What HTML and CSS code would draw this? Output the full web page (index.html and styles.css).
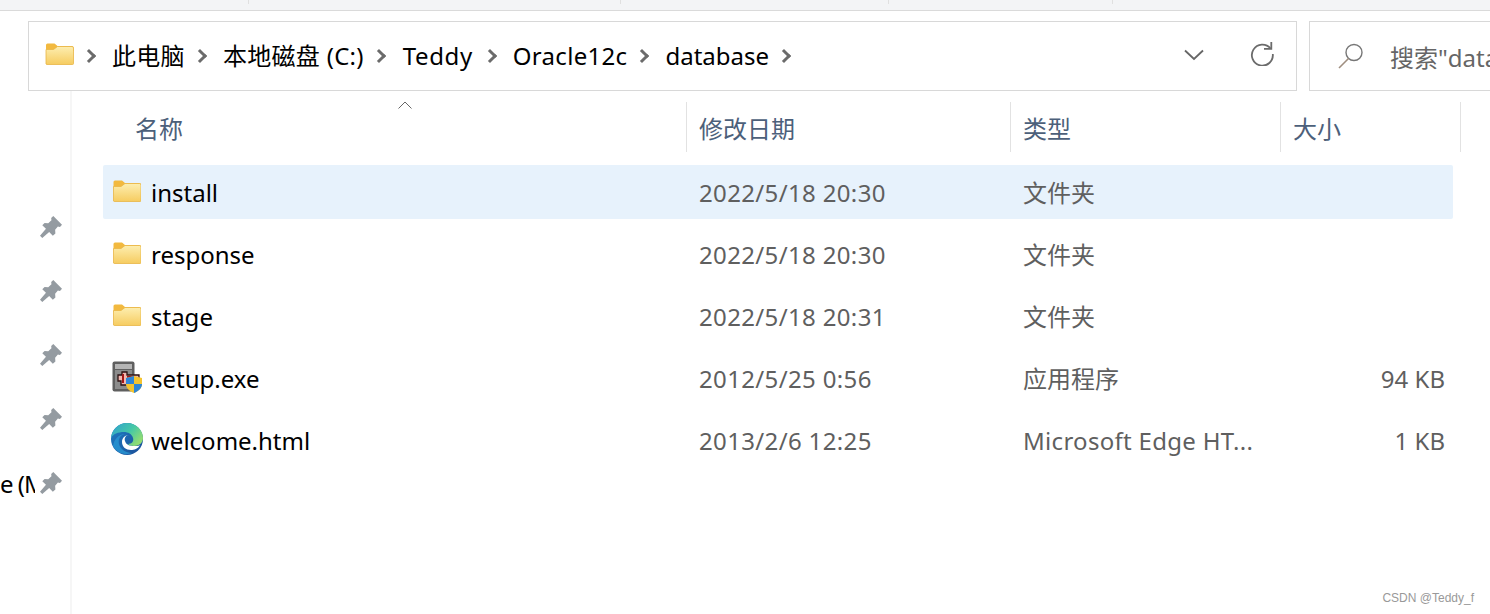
FILE: index.html
```html
<!DOCTYPE html>
<html lang="zh-CN">
<head>
<meta charset="utf-8">
<title>database</title>
<link rel="stylesheet" href="styles.css">
</head>
<body>
<svg class="defs" width="0" height="0" aria-hidden="true">
  <defs>
    <linearGradient id="fg" x1="0" y1="0" x2="0" y2="1">
      <stop offset="0" stop-color="#fdeeb0"/><stop offset="1" stop-color="#f6cc60"/>
    </linearGradient>
    <symbol id="folder" viewBox="0 0 28 22">
      <path d="M0.5 2A1.5 1.5 0 0 1 2 .5H9L12 3H26.5A1.5 1.5 0 0 1 28 4.5V8H.5Z" fill="#f2b93f"/>
      <path d="M.5 21V6.5H8L12 3.5H26.5A1.5 1.5 0 0 1 28 5V20.5A1 1 0 0 1 27 21.5H1.5A1 1 0 0 1 .5 21Z" fill="url(#fg)" stroke="#e9b545" stroke-width=".8"/>
    </symbol>
    <symbol id="pin" viewBox="0 0 24 24">
      <path d="M14.500 0 24 9.500 21.800 12 19.500 11.500 16.500 15 16.800 19 14 21.500 10 17.500 2.500 24 0 21.500 6.500 14 2.500 10 5 7.500 9 8 12.500 4.500 12.200 2.200Z" fill="#949ba1"/>
    </symbol>
    <linearGradient id="eg1" x1="0" y1="0" x2="1" y2="1">
      <stop offset="0" stop-color="#1f7fc6"/><stop offset="1" stop-color="#1b4d96"/>
    </linearGradient>
    <linearGradient id="eg2" x1="0" y1="0" x2="1" y2=".6">
      <stop offset="0" stop-color="#2f9fd2"/><stop offset=".6" stop-color="#45c8a6"/><stop offset="1" stop-color="#8fdc74"/>
    </linearGradient>
  </defs>
</svg>

<div class="tabstrip">
  <span class="tick"></span><span class="tick"></span><span class="tick"></span><span class="tick"></span>
</div>

<div class="navbar">
  <div class="address">
    <svg class="crumb-folder"><use href="#folder"/></svg>
    <span class="sep"></span><span class="crumb">此电脑</span>
    <span class="sep"></span><span class="crumb">本地磁盘 (C:)</span>
    <span class="sep"></span><span class="crumb crumb-wide">Teddy</span>
    <span class="sep"></span><span class="crumb">Oracle12c</span>
    <span class="sep"></span><span class="crumb crumb-plain">database</span>
    <span class="sep"></span>
    <svg class="addr-chevron" viewBox="0 0 20 12"><path d="M1 1.500 10 10l9-8.500" fill="none" stroke="#666" stroke-width="1.800"/></svg>
    <svg class="addr-refresh" viewBox="0 0 24 24"><path d="M20.500 6.500A10.500 10.500 0 1 0 22.800 12" fill="none" stroke="#6b6b6b" stroke-width="1.800"/><path d="M14 6.800h7.300V0" fill="none" stroke="#6b6b6b" stroke-width="1.800"/></svg>
  </div>
  <div class="search">
    <svg class="search-icon" viewBox="0 0 26 26"><circle cx="16" cy="9.500" r="8" fill="none" stroke="#777" stroke-width="1.400"/><path d="M10.500 15.500 1 25" stroke="#a08f80" stroke-width="1.600"/></svg>
    <span class="search-text">搜索"database"</span>
  </div>
</div>

<div class="main">
  <aside class="sidebar">
    <div class="pinrow"><svg class="pin"><use href="#pin"/></svg></div>
    <div class="pinrow"><svg class="pin"><use href="#pin"/></svg></div>
    <div class="pinrow"><svg class="pin"><use href="#pin"/></svg></div>
    <div class="pinrow"><svg class="pin"><use href="#pin"/></svg></div>
    <div class="pinrow"><span class="navlabel">e (M</span><svg class="pin"><use href="#pin"/></svg></div>
  </aside>

  <section class="list">
    <div class="head">
      <div class="hcell hname">名称<svg class="sort" viewBox="0 0 14 8"><path d="M.5 7.500 7 1l6.500 6.500" fill="none" stroke="#666" stroke-width="1"/></svg></div>
      <div class="hcell hdate">修改日期</div>
      <div class="hcell htype">类型</div>
      <div class="hcell hsize">大小</div>
    </div>

    <div class="row selected">
      <div class="name"><svg class="ficon"><use href="#folder"/></svg>install</div>
      <div class="date">2022/5/18 20:30</div><div class="type">文件夹</div><div class="size"></div>
    </div>
    <div class="row">
      <div class="name"><svg class="ficon"><use href="#folder"/></svg>response</div>
      <div class="date">2022/5/18 20:30</div><div class="type">文件夹</div><div class="size"></div>
    </div>
    <div class="row">
      <div class="name"><svg class="ficon"><use href="#folder"/></svg>stage</div>
      <div class="date">2022/5/18 20:31</div><div class="type">文件夹</div><div class="size"></div>
    </div>
    <div class="row">
      <div class="name">
        <svg class="ficon tall" viewBox="0 0 30 32">
          <rect x="0.500" y="0.500" width="22" height="30" rx="2" fill="#5f5f5f"/>
          <rect x="3" y="3" width="17" height="5" fill="#b4b4b4"/>
          <rect x="3" y="9" width="17" height="19" fill="#8c8c8c"/>
          <path d="M6 14h4v-3h5v3h12v6H15v4H9v-4H6Z" fill="#f3b7b0" stroke="#2c1212" stroke-width="1.300"/>
          <path d="M11 13v9M15 16h5v2h-5" stroke="#a31818" stroke-width="2" fill="none"/>
          <path d="M14 17 22 15l8 2v6c0 4-3 7-8 9-5-2-8-5-8-9Z" fill="#f4c430"/>
          <path d="M22 15v8h-8v-6ZM22 23h8c0 4-3 7-8 9Z" fill="#2f86d6"/>
        </svg>setup.exe
      </div>
      <div class="date">2012/5/25 0:56</div><div class="type">应用程序</div><div class="size">94 KB</div>
    </div>
    <div class="row">
      <div class="name">
        <svg class="ficon tall" viewBox="0 0 32 32">
          <circle cx="16" cy="16" r="16" fill="url(#eg1)"/>
          <path d="M0 15C1 6 8 0 16 0c9 0 16 7 16 15 0 5-4 8-9 8-3 0-5-1-6-2 4 0 6-3 5-6-1-4-5-6-9-6C7 9 2 11 0 15Z" fill="url(#eg2)"/>
          <path d="M14 11c-5 1-7 5-6 10 1 5 7 9 13 9-7 3-15 0-19-7 1-7 6-12 12-12Z" fill="#2a9ad6" opacity=".75"/>
          <path d="M23 23c-4 0-8-1-9-5-1-3 1-6 4-6-4 0-7 3-7 7 0 5 4 8 9 8 3 0 7-1 9-5-1 1-3 1-6 1Z" fill="#fff"/>
        </svg>welcome.html
      </div>
      <div class="date">2013/2/6 12:25</div><div class="type type-wide">Microsoft Edge HT...</div><div class="size">1 KB</div>
    </div>
  </section>
</div>
<div class="watermark">CSDN @Teddy_f</div>
</body>
</html>
```
FILE: styles.css
```css
* { box-sizing: border-box; }
html, body { margin: 0; height: 100%; }
body {
  width: 1490px;
  height: 614px;
  overflow: hidden;
  background: #fff;
  position: relative;
  font-family: "Noto Sans", "Noto Sans CJK SC", sans-serif;
  font-size: 24px;
  color: #000;
}
.defs { position: absolute; }

.tabstrip {
  height: 11px;
  background: #f3f4f6;
  border-bottom: 1px solid #dadada;
  display: flex;
  padding-left: 248px;
}
.tick { width: 1px; height: 4px; background: #e0e0e0; }
.tick:nth-child(1) { margin-right: 371px; }
.tick:nth-child(2) { margin-right: 267px; }
.tick:nth-child(3) { margin-right: 223px; }

.navbar {
  display: flex;
  gap: 12px;
  margin-top: 10px;
  padding-left: 28px;
  height: 70px;
}
.address {
  width: 1269px;
  border: 1px solid #d8d8d8;
  display: flex;
  align-items: center;
  padding-left: 16px;
  flex: none;
}
.crumb-folder { width: 29px; height: 22px; flex: none; margin-top: -5px; }
.sep {
  width: 10px; height: 10px;
  border-top: 3px solid #6b6b6b;
  border-right: 3px solid #6b6b6b;
  transform: rotate(45deg);
  flex: none;
  margin: 0 18px 0 10px;
}
.crumb { white-space: nowrap; line-height: 1; letter-spacing: .3px; }
.crumb-wide { letter-spacing: .6px; margin: 0 2px 0 1px; }
.crumb-plain { letter-spacing: 0; }
.addr-chevron { width: 20px; height: 12px; margin-left: auto; margin-right: 46px; margin-top: -3px; flex: none; }
.addr-refresh { width: 24px; height: 24px; margin-right: 22px; margin-top: -5px; flex: none; }
.search {
  flex: none;
  width: 260px;
  border: 1px solid #d8d8d8;
  display: flex;
  align-items: center;
  padding-left: 28px;
  overflow: hidden;
  color: #666;
  white-space: nowrap;
}
.search-icon { width: 26px; height: 26px; flex: none; margin-right: 26px; }

.main { display: flex; height: 523px; }
.sidebar {
  width: 72px;
  flex: none;
  border-right: 2px solid #f6f6f6;
  padding-top: 124px;
  display: flex;
  flex-direction: column;
  gap: 40px;
}
.pinrow { height: 24px; display: flex; justify-content: flex-end; align-items: center; padding-right: 8px; position: relative; }
.pin { width: 22px; height: 22px; flex: none; }
.navlabel {
  width: 35px;
  overflow: hidden;
  white-space: nowrap;
  margin-right: 5px;
  color: #000;
  letter-spacing: -1px;
}

.list { width: 1389px; padding-left: 31px; padding-top: 11px; }
.head { display: grid; grid-template-columns: 584px 324px 270px 180px; height: 50px; }
.hcell {
  color: #4c607a;
  padding-left: 12px;
  padding-top: 4px;
  border-right: 1px solid #e2e2e2;
  display: flex;
  align-items: center;
  position: relative;
  line-height: 1;
}
.hname { padding-left: 32px; }
.sort { position: absolute; left: 295px; top: -1px; width: 14px; height: 8px; }

.row {
  display: grid;
  grid-template-columns: 584px 324px 270px 164px;
  width: 1350px;
  height: 54px;
  margin-bottom: 8px;
  align-items: center;
  border-radius: 2px;
}
.head + .row { margin-top: 13px; }
.selected { background: #e7f2fc; }
.name { display: flex; align-items: center; padding-left: 10px; white-space: nowrap; }
.ficon { width: 28px; height: 22px; flex: none; margin-right: 10px; margin-top: -2px; }
.ficon.tall { width: 32px; height: 32px; margin-left: -2px; margin-right: 8px; }
.date, .type { padding-left: 12px; color: #5f5f5f; white-space: nowrap; }
.date { letter-spacing: .35px; }
.type { padding-bottom: 2px; }
.type-wide { letter-spacing: .3px; padding-bottom: 0; }
.size { text-align: right; color: #5f5f5f; white-space: nowrap; }

.watermark {
  position: absolute;
  right: 16px;
  bottom: 9px;
  font-family: "Liberation Sans", sans-serif;
  font-size: 12px;
  color: #999;
}
```
